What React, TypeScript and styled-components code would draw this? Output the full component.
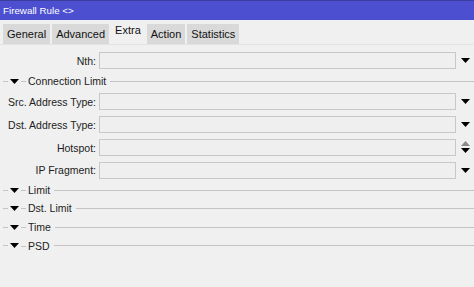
import React from 'react';
import styled, { createGlobalStyle } from 'styled-components';

const GlobalStyle = createGlobalStyle`
  html, body {
    margin: 0;
    padding: 0;
    background: #f0f0f0;
  }
  body {
    font-family: Arial, 'Liberation Sans', sans-serif;
    font-size: 11px;
    color: #222;
  }
`;

type FieldKind = 'drop' | 'spin';

const fields: { label: string; kind: FieldKind; h: number }[] = [
  { label: 'Src. Address Type:', kind: 'drop', h: 23 },
  { label: 'Dst. Address Type:', kind: 'drop', h: 23 },
  { label: 'Hotspot:', kind: 'spin', h: 23 },
  { label: 'IP Fragment:', kind: 'drop', h: 22 },
];

const sections = ['Limit', 'Dst. Limit', 'Time', 'PSD'];
const tabs = ['General', 'Advanced', 'Extra', 'Action', 'Statistics'];

function DownArrow({ color = '#000' }: { color?: string }) {
  return (
    <svg width='9' height='5' viewBox='0 0 9 5'>
      <polygon points='0,0 9,0 4.5,5' fill={color} />
    </svg>
  );
}

function SpinArrows() {
  return (
    <svg width='9' height='13' viewBox='0 0 9 13'>
      <polygon points='4.5,0 9,5 0,5' fill='#8a8a8a' />
      <polygon points='0,7 9,7 4.5,12' fill='#000' />
    </svg>
  );
}

function Section({ title, h }: { title: string; h: number }) {
  return (
    <SectionRow $h={h}>
      <Stub />
      <DownArrow />
      <SectionTitle>{title}</SectionTitle>
      <Rule />
    </SectionRow>
  );
}

function App() {
  return (
    <Window>
      <GlobalStyle />
      <TitleBar>Firewall Rule &lt;&gt;</TitleBar>
      <TabStrip>
        {tabs.map((t) => (
          <Tab key={t} $active={t === 'Extra'}>
            {t}
          </Tab>
        ))}
      </TabStrip>
      <Form>
        <FieldRow $h={23}>
          <Label>Nth:</Label>
          <Input />
          <Side>
            <DownArrow />
          </Side>
        </FieldRow>
        <Section title='Connection Limit' h={18} />
        {fields.map((f) => (
          <FieldRow key={f.label} $h={f.h}>
            <Label>{f.label}</Label>
            <Input />
            <Side>{f.kind === 'spin' ? <SpinArrows /> : <DownArrow />}</Side>
          </FieldRow>
        ))}
        {sections.map((s, i) => (
          <Section key={s} title={s} h={i === 0 ? 18 : 18.7} />
        ))}
      </Form>
    </Window>
  );
}

export default App;

const Window = styled.div`
  width: 474px;
  height: 287px;
  background: #f0f0f0;
  overflow: hidden;
`;

const TitleBar = styled.div`
  height: 19px;
  border-top: 1px solid #3b3e9c;
  background: #4b4fd0;
  color: #fff;
  font-size: 9.8px;
  line-height: 19px;
  padding-left: 3px;
`;

const TabStrip = styled.div`
  display: flex;
  align-items: flex-end;
  gap: 2px;
  height: 24px;
  padding-left: 3px;
  border-bottom: 1px solid #e4e4e4;
`;

const Tab = styled.div<{ $active?: boolean }>`
  height: ${(p) => (p.$active ? 23 : 20)}px;
  line-height: ${(p) => (p.$active ? 19 : 20)}px;
  padding: 0 4px;
  font-size: 11px;
  color: #111;
  background: ${(p) => (p.$active ? '#f0f0f0' : '#d9d9d9')};
  box-sizing: border-box;
`;

const Form = styled.div`
  padding-top: 4px;
`;

const FieldRow = styled.div<{ $h: number }>`
  display: grid;
  grid-template-columns: 96px 357px 1fr;
  column-gap: 3px;
  align-items: center;
  height: ${(p) => p.$h}px;
`;

const Label = styled.div`
  text-align: right;
  font-size: 10.5px;
  color: #222;
  white-space: nowrap;
`;

const Input = styled.div`
  height: 17px;
  box-sizing: border-box;
  border: 1px solid #c8c8c8;
  background: #efefef;
`;

const Side = styled.div`
  display: flex;
  justify-content: center;
  padding-right: 2px;
`;

const SectionRow = styled.div<{ $h: number }>`
  display: flex;
  align-items: center;
  height: ${(p) => p.$h}px;
  padding-left: 3px;
`;

const Stub = styled.div`
  width: 5px;
  height: 1px;
  background: #c4c4c4;
  margin-right: 2px;
`;

const SectionTitle = styled.span`
  font-size: 10.5px;
  color: #222;
  margin: 0 4px 0 9px;
  position: relative;
  &::before {
    content: '';
    position: absolute;
    left: -7px;
    top: 50%;
    width: 5px;
    height: 1px;
    background: #c4c4c4;
  }
`;

const Rule = styled.div`
  flex: 1;
  height: 1px;
  background: #c4c4c4;
`;
